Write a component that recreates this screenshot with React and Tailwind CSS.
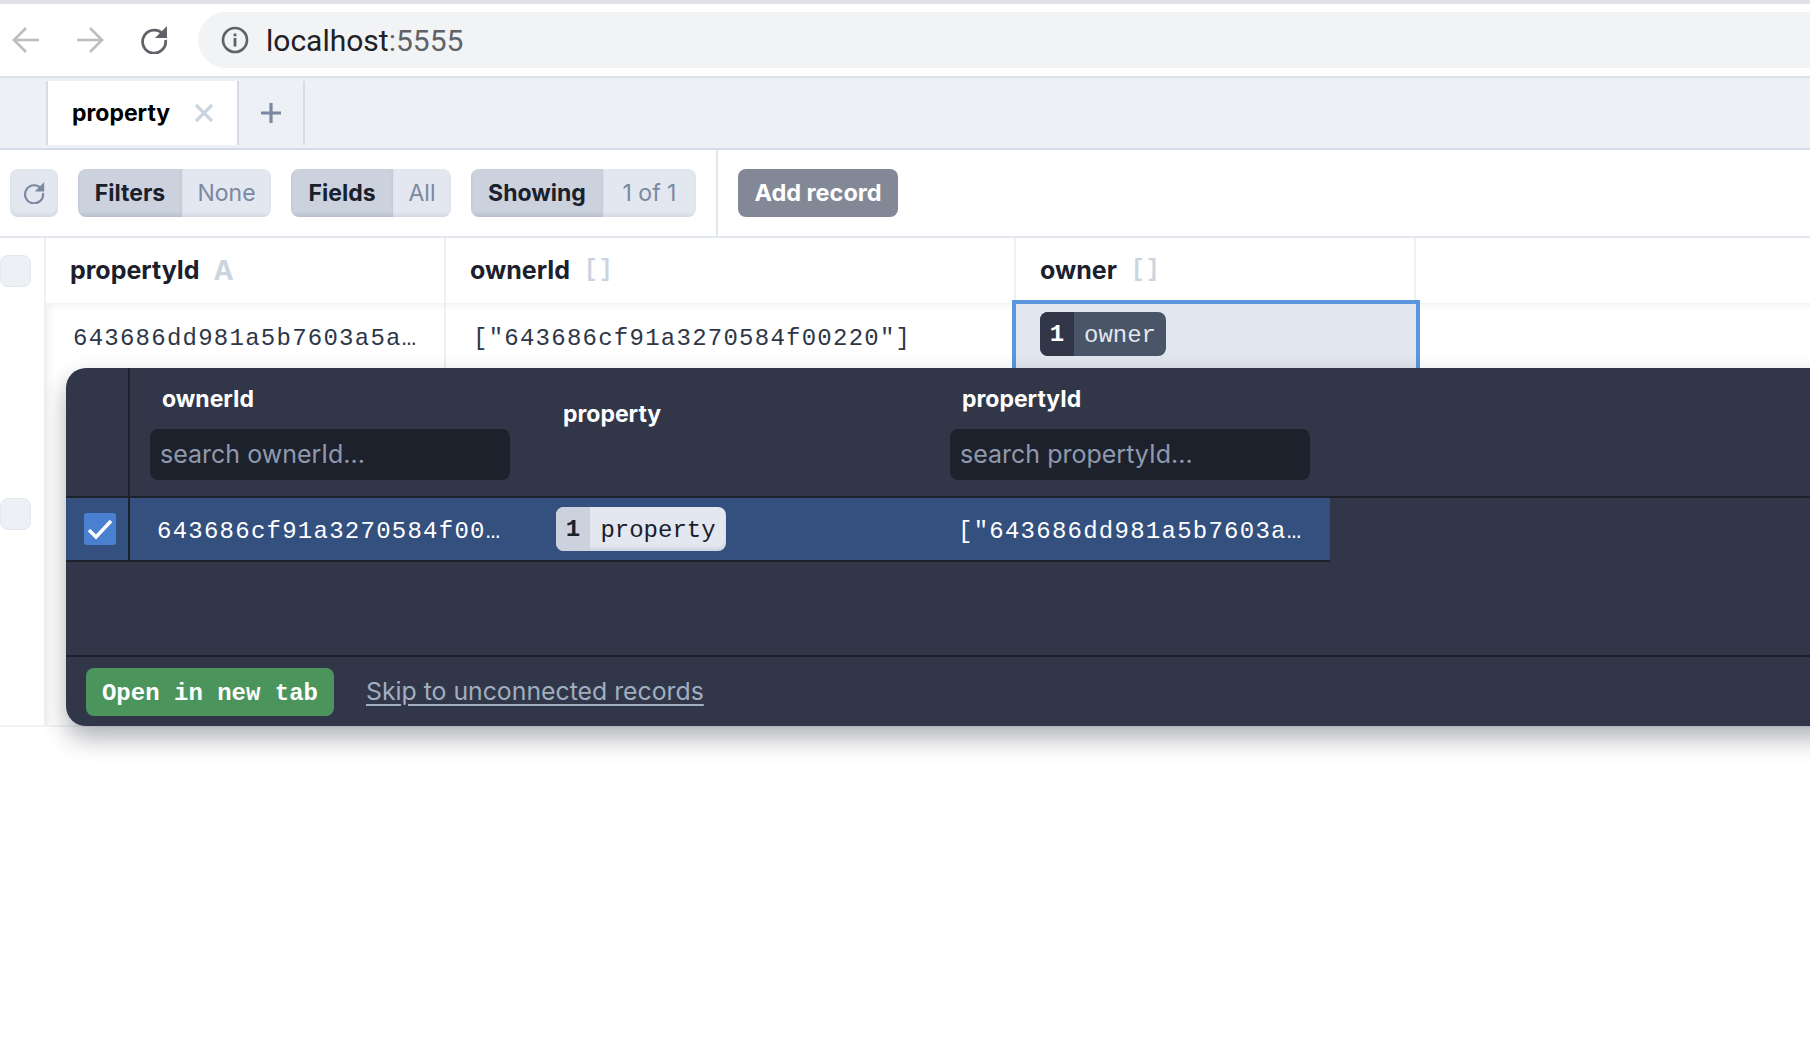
import { useState } from 'react'

const mono = "font-['Liberation_Mono',monospace]"

function Back() {
  return (
    <svg width="30" height="30" viewBox="0 0 30 30" fill="none" stroke="#bcbdbf" strokeWidth="2.6">
      <path d="M28 15H3M15 3L3 15l12 12" />
    </svg>
  )
}

function Forward() {
  return (
    <svg width="30" height="30" viewBox="0 0 30 30" fill="none" stroke="#bcbdbf" strokeWidth="2.6">
      <path d="M2 15h25M15 3l12 12-12 12" />
    </svg>
  )
}

function Reload({ size = 28, color = '#5f6368', sw = 2.8 }) {
  return (
    <svg width={size} height={size} viewBox="0 0 28 28" fill="none">
      <path d="M23.5 9A11.5 11.5 0 1 0 25.5 14" stroke={color} strokeWidth={sw} />
      <path d="M27 0v12H15z" fill={color} />
    </svg>
  )
}

function InfoIcon() {
  return (
    <svg width="28" height="28" viewBox="0 0 28 28" fill="none">
      <circle cx="14" cy="14" r="12" stroke="#5f6368" strokeWidth="2.6" />
      <rect x="12.6" y="12" width="2.8" height="8.5" fill="#5f6368" />
      <rect x="12.6" y="7.5" width="2.8" height="2.8" fill="#5f6368" />
    </svg>
  )
}

function Segment({ label, value, labelW, valueW }) {
  return (
    <div className="flex h-12 rounded-lg overflow-hidden text-[23px] leading-none">
      <div className={`${labelW} flex items-center justify-center bg-[#cbd2de] font-bold text-[#1a202c] shadow-[inset_0_-3px_3px_rgba(100,116,139,0.18)]`}>{label}</div>
      <div className={`${valueW} flex items-center justify-center bg-[#e2e7f0] text-[#7b88a1] shadow-[inset_0_-3px_3px_rgba(100,116,139,0.1)]`}>{value}</div>
    </div>
  )
}

function HeadCell({ name, type, width }) {
  return (
    <div className={`${width} shrink-0 h-full flex items-center gap-[14px] pl-6 border-r-2 border-[#edf0f5]`}>
      <span className="text-[25px] font-bold text-[#1a202c]">{name}</span>
      {type === 'A' ? (
        <span className="text-[27px] leading-none font-bold text-[#cbd5e0]">A</span>
      ) : (
        <span className={`text-[23px] font-bold text-[#cbd5e0] tracking-[1px] ${mono}`}>[]</span>
      )}
    </div>
  )
}

function RelationBadge({ text, dark, className }) {
  return (
    <div className={`${className} flex h-11 rounded-lg overflow-hidden text-[24px] leading-none ${mono} ${dark ? 'bg-[#4a5568] text-[#e2e8f0]' : 'bg-[#e2e7f0] text-[#1a202c] shadow-[inset_0_-3px_3px_rgba(100,116,139,0.15)]'}`}>
      <div className={`w-[34px] flex items-center justify-center pt-[2px] font-bold ${dark ? 'bg-[#313749] text-white' : 'bg-[#cbd2de]'}`}>1</div>
      <div className="flex-1 flex items-center justify-center pt-[4px]">{text}</div>
    </div>
  )
}

function Popup() {
  const [checked, setChecked] = useState(true)
  return (
    <div className="absolute left-[66px] top-[368px] w-[1800px] h-[358px] rounded-l-[20px] bg-[#313749] overflow-hidden shadow-[0_12px_24px_rgba(26,32,44,0.35)] text-white flex flex-col">
      <div className="h-[130px] shrink-0 flex border-b-2 border-[#1d212c]">
        <div className="w-[64px] shrink-0 border-r-2 border-[#1d212c]" />
        <div className="w-[395px] shrink-0 pl-5 pt-4">
          <div className="pl-3 text-[23px] font-bold leading-[30px]">ownerId</div>
          <div className="mt-[15px] w-[360px] h-[51px] rounded-lg bg-[#1d212c] pl-[10px] flex items-center text-[25px] text-[#8e99ae]">search ownerId...</div>
        </div>
        <div className="w-[400px] shrink-0 pl-[38px] flex items-center pb-[35px]">
          <span className="text-[23px] font-bold">property</span>
        </div>
        <div className="w-[400px] shrink-0 pl-[25px] pt-4">
          <div className="pl-3 text-[23px] font-bold leading-[30px]">propertyId</div>
          <div className="mt-[15px] w-[360px] h-[51px] rounded-lg bg-[#1d212c] pl-[10px] flex items-center text-[25px] text-[#8e99ae]">search propertyId...</div>
        </div>
      </div>
      <div className="h-[64px] shrink-0 flex w-[1264px] bg-[#34507f] border-b-2 border-[#1d212c] text-[24px]">
        <div className="w-[64px] shrink-0 flex items-center pl-[18px] border-r-2 border-[#1d212c]">
          <button onClick={() => setChecked(!checked)} className="w-8 h-8 rounded-[3px] bg-[#4a80d0] flex items-center justify-center">
            {checked && (
              <svg width="26" height="22" viewBox="0 0 26 22" fill="none" stroke="white" strokeWidth="3.4">
                <path d="M2 12l7 7L24 3" />
              </svg>
            )}
          </button>
        </div>
        <div className={`w-[395px] shrink-0 pl-[27px] pt-[6px] flex items-center ${mono} tracking-[1.25px]`}>643686cf91a3270584f00…</div>
        <div className="w-[400px] shrink-0 flex items-center pl-[31px]">
          <RelationBadge text="property" className="w-[170px]" />
        </div>
        <div className={`w-[405px] shrink-0 pl-[33px] pt-[6px] flex items-center ${mono} tracking-[1.25px]`}>["643686dd981a5b7603a…</div>
      </div>
      <div className="flex-1" />
      <div className="h-[71px] shrink-0 border-t-2 border-[#1d212c] flex items-center pl-5">
        <button className={`h-12 w-[248px] pt-[4px] rounded-lg bg-[#4b955d] text-white text-[24px] font-bold ${mono}`}>Open in new tab</button>
        <a className="ml-8 text-[24.8px] text-[#a0aec0] underline underline-offset-4">Skip to unconnected records</a>
      </div>
    </div>
  )
}

export default function App() {
  return (
    <div className="relative w-full h-screen overflow-hidden bg-white font-['Inter',sans-serif]">
      <div className="h-1 bg-[#dfe1e6]" />
      {/* browser chrome */}
      <div className="h-[72px] flex items-center pl-[11px]">
        <Back />
        <div className="ml-[34px]"><Forward /></div>
        <div className="ml-[35px]"><Reload /></div>
        <div className="ml-[30px] flex-1 h-14 rounded-l-[28px] bg-[#f1f3f5] flex items-center pl-[23px]">
          <InfoIcon />
          <span className="ml-[17px] text-[30px] text-[#202124] font-['Roboto',sans-serif]">localhost<span className="text-[#5f6368]">:5555</span></span>
        </div>
      </div>
      {/* tabs */}
      <div className="h-[74px] bg-[#edf0f5] border-t-2 border-b-2 border-t-[#dfe2e8] border-b-[#d5dce8] flex">
        <div className="w-[46px] shrink-0" />
        <div className="my-[3px] w-[193px] bg-white border-x-2 border-[#d5dce8] flex items-center pl-6 gap-[24px]">
          <span className="text-[23px] font-bold text-black leading-none">property</span>
          <svg width="20" height="20" viewBox="0 0 20 20" stroke="#cbd5e0" strokeWidth="3.2"><path d="M2 2l16 16M18 2L2 18" /></svg>
        </div>
        <div className="my-[3px] w-[66px] border-r-2 border-[#d5dce8] flex items-center justify-center">
          <svg width="20" height="20" viewBox="0 0 20 20" stroke="#7b88a1" strokeWidth="3.2"><path d="M10 0v20M0 10h20" /></svg>
        </div>
      </div>
      {/* toolbar */}
      <div className="h-[88px] flex border-b-2 border-[#e2e7f0]">
        <div className="w-[718px] shrink-0 flex items-center pl-[10px] border-r-2 border-[#e2e7f0]">
          <div className="w-12 h-12 rounded-lg bg-[#e2e7f0] flex items-center justify-center shadow-[inset_0_-3px_3px_rgba(100,116,139,0.1)]">
            <Reload size={22} color="#7b88a1" />
          </div>
          <div className="ml-5"><Segment label="Filters" value="None" labelW="w-[104px]" valueW="w-[89px]" /></div>
          <div className="ml-5"><Segment label="Fields" value="All" labelW="w-[102px]" valueW="w-[58px]" /></div>
          <div className="ml-5"><Segment label="Showing" value="1 of 1" labelW="w-[132px]" valueW="w-[93px]" /></div>
        </div>
        <div className="flex items-center pl-5">
          <button className="w-40 h-12 rounded-lg bg-[#828896] text-white text-[23.5px] font-bold">Add record</button>
        </div>
      </div>
      {/* table */}
      <div className="h-[65px] flex items-center">
        <div className="w-[46px] h-full shrink-0 flex items-center border-r-2 border-[#edf0f5]">
          <div className="w-[31px] h-8 rounded-lg bg-[#edf0f5] border border-[#e2e7f0]" />
        </div>
        <HeadCell name="propertyId" type="A" width="w-[400px]" />
        <HeadCell name="ownerId" type="[]" width="w-[570px]" />
        <HeadCell name="owner" type="[]" width="w-[400px]" />
      </div>
      <div className="h-[424px] flex border-b-2 border-[#f1f3f6]">
        <div className="w-[46px] shrink-0 border-r-2 border-[#edf0f5] pt-[195px]">
          <div className="w-[31px] h-8 rounded-lg bg-[#edf0f5] border border-[#e2e7f0]" />
        </div>
        <div className="flex-1 flex items-start h-full shadow-[inset_7px_7px_7px_-5px_rgba(26,32,44,0.08)]">
          <div className={`w-[400px] shrink-0 h-[65px] pl-[27px] pt-[7px] flex items-center text-[24px] text-[#2d3748] tracking-[1.25px] border-r-2 border-[#edf0f5] ${mono}`}>643686dd981a5b7603a5a…</div>
          <div className={`w-[570px] shrink-0 h-[65px] pl-[27px] pt-[7px] flex items-center text-[24px] text-[#2d3748] tracking-[1.25px] border-r-2 border-[#edf0f5] ${mono}`}>["643686cf91a3270584f00220"]</div>
          <div className="ml-[-4px] mt-[-3px] w-[408px] h-[72px] shrink-0 bg-[#e2e6ef] border-4 border-[#5a96e0] pl-[24px] pt-2">
            <RelationBadge text="owner" dark className="w-[126px]" />
          </div>
        </div>
      </div>
      <Popup />
    </div>
  )
}
